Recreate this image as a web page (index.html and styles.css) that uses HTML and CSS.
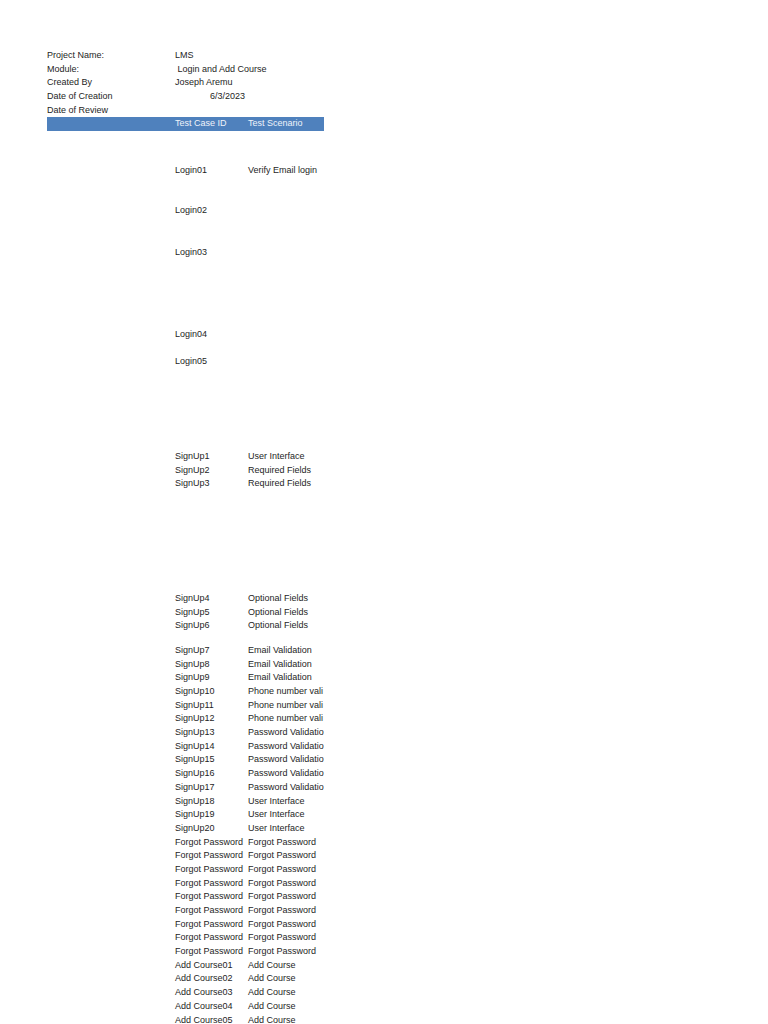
FILE: index.html
```html
<!DOCTYPE html>
<html lang="en">
<head>
<meta charset="utf-8">
<title>LMS Test Cases</title>
<link rel="stylesheet" href="styles.css">
</head>
<body>
<div class="sheet">
  <div class="row meta"><div class="a">Project Name:</div><div class="b">LMS</div><div class="c"></div></div>
  <div class="row meta"><div class="a">Module:</div><div class="b">&nbsp;Login and Add Course</div><div class="c"></div></div>
  <div class="row meta"><div class="a">Created By</div><div class="b">Joseph Aremu</div><div class="c"></div></div>
  <div class="row meta"><div class="a">Date of Creation</div><div class="b num">6/3/2023</div><div class="c"></div></div>
  <div class="row meta"><div class="a">Date of Review</div><div class="b"></div><div class="c"></div></div>
  <div class="row head"><div class="a"></div><div class="b">Test Case ID</div><div class="c">Test Scenario</div></div>

  <div class="row h47"><div class="a"></div><div class="b">Login01</div><div class="c">Verify Email login</div></div>
  <div class="row h40"><div class="a"></div><div class="b">Login02</div><div class="c"></div></div>
  <div class="row h42"><div class="a"></div><div class="b">Login03</div><div class="c"></div></div>
  <div class="row h82"><div class="a"></div><div class="b">Login04</div><div class="c"></div></div>
  <div class="row h27"><div class="a"></div><div class="b">Login05</div><div class="c"></div></div>

  <div class="row h95"><div class="a"></div><div class="b">SignUp1</div><div class="c">User Interface</div></div>
  <div class="row"><div class="a"></div><div class="b">SignUp2</div><div class="c">Required Fields</div></div>
  <div class="row"><div class="a"></div><div class="b">SignUp3</div><div class="c">Required Fields</div></div>
  <div class="row h115"><div class="a"></div><div class="b">SignUp4</div><div class="c">Optional Fields</div></div>
  <div class="row"><div class="a"></div><div class="b">SignUp5</div><div class="c">Optional Fields</div></div>
  <div class="row"><div class="a"></div><div class="b">SignUp6</div><div class="c">Optional Fields</div></div>
  <div class="row h25"><div class="a"></div><div class="b">SignUp7</div><div class="c">Email Validation</div></div>
  <div class="row"><div class="a"></div><div class="b">SignUp8</div><div class="c">Email Validation</div></div>
  <div class="row"><div class="a"></div><div class="b">SignUp9</div><div class="c">Email Validation</div></div>
  <div class="row"><div class="a"></div><div class="b">SignUp10</div><div class="c">Phone number vali</div></div>
  <div class="row"><div class="a"></div><div class="b">SignUp11</div><div class="c">Phone number vali</div></div>
  <div class="row"><div class="a"></div><div class="b">SignUp12</div><div class="c">Phone number vali</div></div>
  <div class="row"><div class="a"></div><div class="b">SignUp13</div><div class="c">Password Validatio</div></div>
  <div class="row"><div class="a"></div><div class="b">SignUp14</div><div class="c">Password Validatio</div></div>
  <div class="row"><div class="a"></div><div class="b">SignUp15</div><div class="c">Password Validatio</div></div>
  <div class="row"><div class="a"></div><div class="b">SignUp16</div><div class="c">Password Validatio</div></div>
  <div class="row"><div class="a"></div><div class="b">SignUp17</div><div class="c">Password Validatio</div></div>
  <div class="row"><div class="a"></div><div class="b">SignUp18</div><div class="c">User Interface</div></div>
  <div class="row"><div class="a"></div><div class="b">SignUp19</div><div class="c">User Interface</div></div>
  <div class="row"><div class="a"></div><div class="b">SignUp20</div><div class="c">User Interface</div></div>
  <div class="row"><div class="a"></div><div class="b">Forgot Password</div><div class="c">Forgot Password</div></div>
  <div class="row"><div class="a"></div><div class="b">Forgot Password</div><div class="c">Forgot Password</div></div>
  <div class="row"><div class="a"></div><div class="b">Forgot Password</div><div class="c">Forgot Password</div></div>
  <div class="row"><div class="a"></div><div class="b">Forgot Password</div><div class="c">Forgot Password</div></div>
  <div class="row"><div class="a"></div><div class="b">Forgot Password</div><div class="c">Forgot Password</div></div>
  <div class="row"><div class="a"></div><div class="b">Forgot Password</div><div class="c">Forgot Password</div></div>
  <div class="row"><div class="a"></div><div class="b">Forgot Password</div><div class="c">Forgot Password</div></div>
  <div class="row"><div class="a"></div><div class="b">Forgot Password</div><div class="c">Forgot Password</div></div>
  <div class="row"><div class="a"></div><div class="b">Forgot Password</div><div class="c">Forgot Password</div></div>
  <div class="row"><div class="a"></div><div class="b">Add Course01</div><div class="c">Add Course</div></div>
  <div class="row"><div class="a"></div><div class="b">Add Course02</div><div class="c">Add Course</div></div>
  <div class="row"><div class="a"></div><div class="b">Add Course03</div><div class="c">Add Course</div></div>
  <div class="row"><div class="a"></div><div class="b">Add Course04</div><div class="c">Add Course</div></div>
  <div class="row"><div class="a"></div><div class="b">Add Course05</div><div class="c">Add Course</div></div>
</div>
</body>
</html>
```

FILE: styles.css
```css
html, body {
  margin: 0;
  padding: 0;
  background: #ffffff;
}

body {
  font-family: "Liberation Sans", Arial, sans-serif;
  font-size: 9px;
  color: #1e1e1e;
}

.sheet {
  padding: 49px 0 0 47px;
  width: 277px;
}

.row {
  display: grid;
  grid-template-columns: 125px 73px 79px;
  height: 13.7px;
  align-items: end;
  line-height: 13.7px;
}

.row > div {
  white-space: pre;
  overflow: hidden;
  height: 13.7px;
}

.meta > div {
  overflow: visible;
}

.b, .c {
  padding-left: 3px;
}

.num {
  text-align: right;
}

.head {
  background: #4f81bd;
  color: #eef3fa;
}

.h47 { height: 46.6px; }
.h40 { height: 40px; }
.h42 { height: 42px; }
.h82 { height: 82px; }
.h27 { height: 27px; }
.h95 { height: 95px; }
.h115 { height: 114.6px; }
.h25 { height: 24.6px; }
```
